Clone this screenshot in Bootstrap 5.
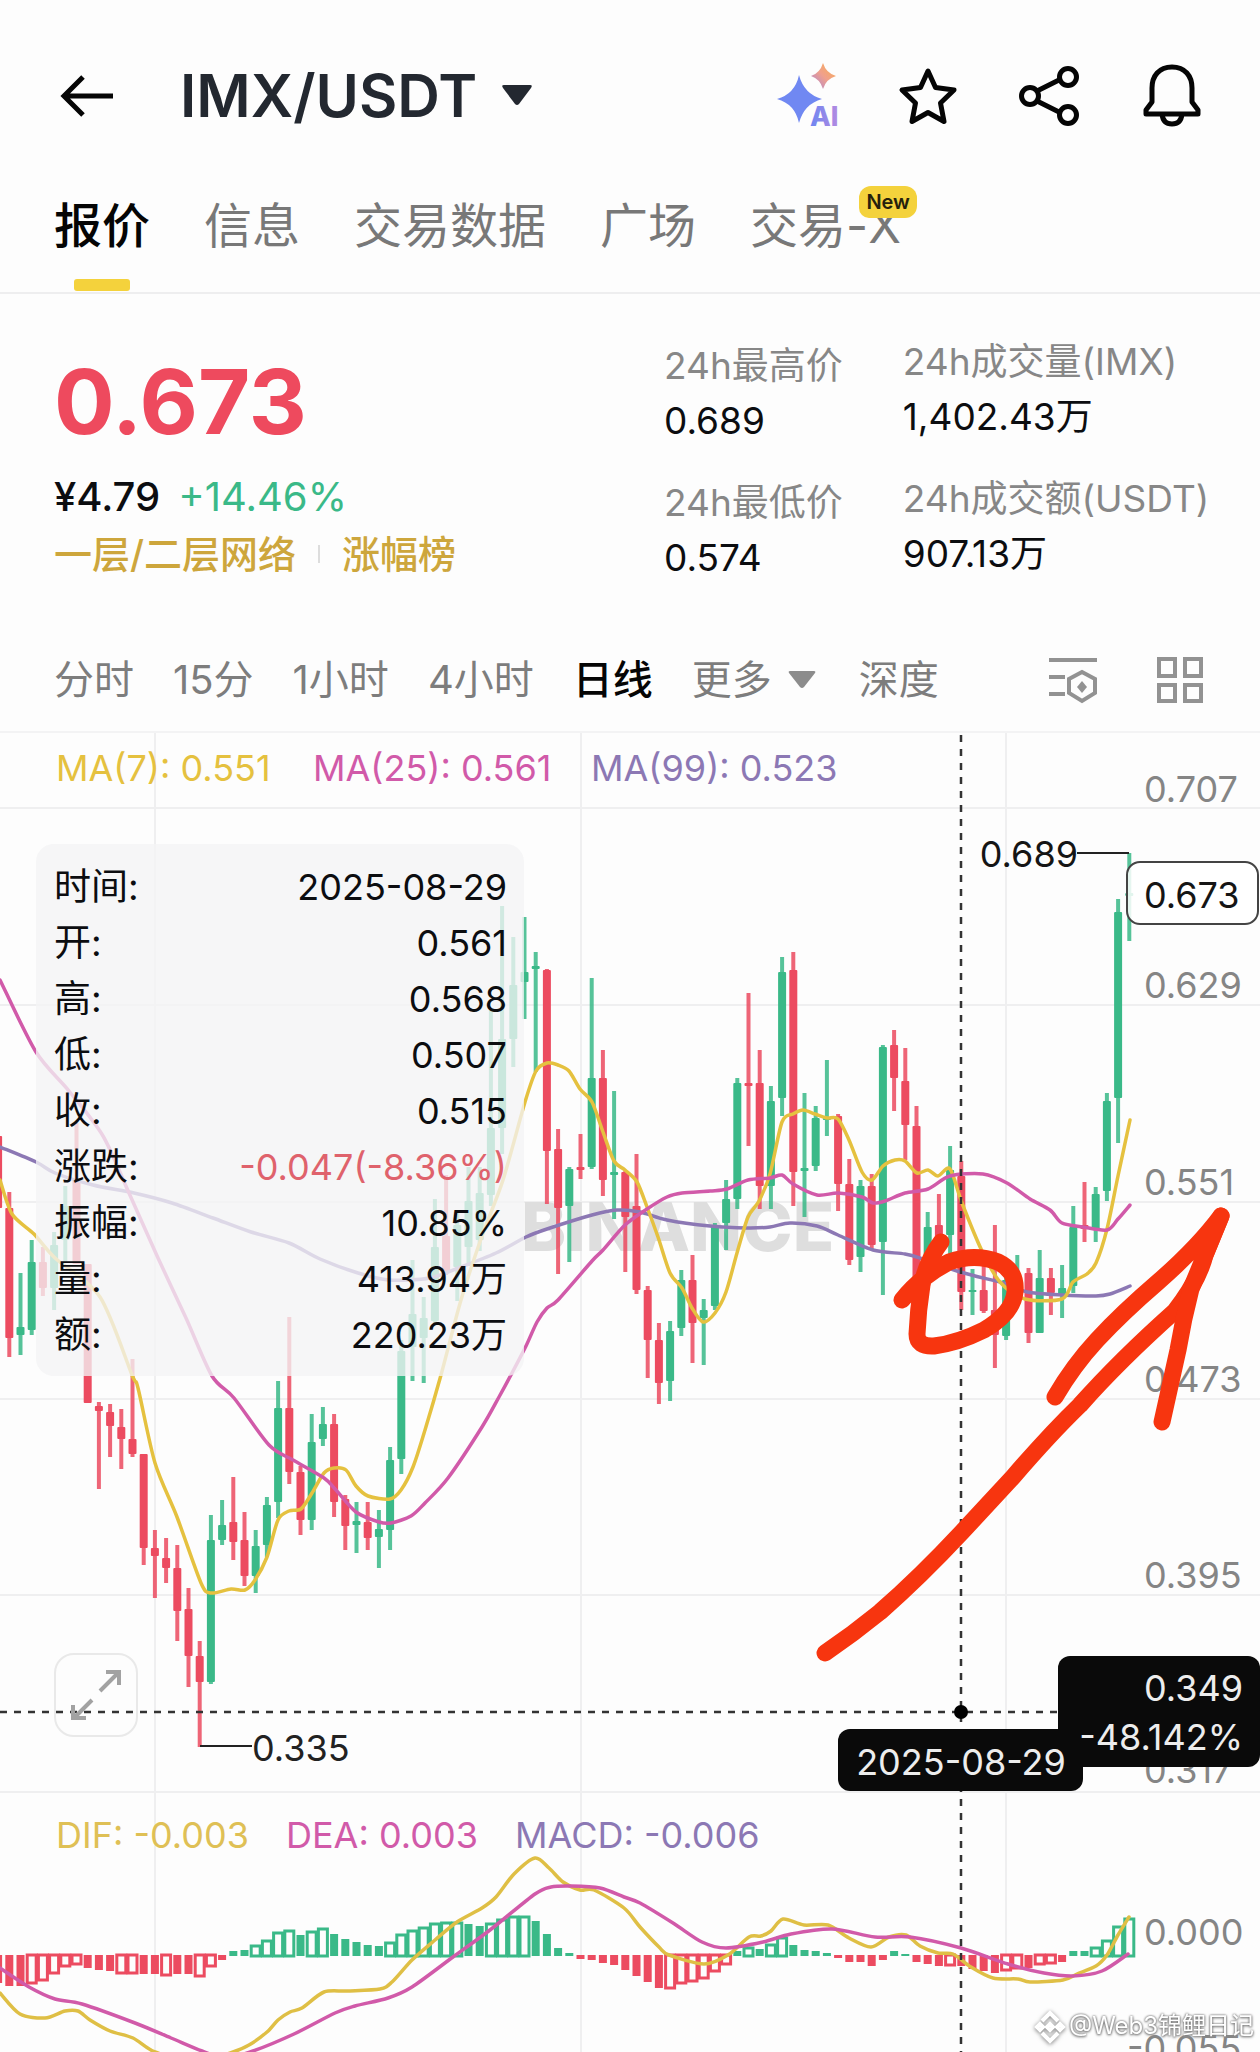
<!DOCTYPE html>
<html lang="zh-CN">
<head>
<meta charset="utf-8">
<meta name="viewport" content="width=device-width, initial-scale=1">
<title>IMX/USDT</title>
<link href="https://cdn.jsdelivr.net/npm/bootstrap@5.3.0/dist/css/bootstrap.min.css" rel="stylesheet">
<style>
:root { --up:#3ab988; --down:#ec4b60; --gold:#f4d23c; --ink:#0c0d10; --muted-ink:#7d7d7d; }
body { font-family: Inter, "Noto Sans CJK SC", sans-serif; background:#fdfdfd; color:var(--ink); overflow-x:hidden; }
button { color:inherit; }
.bar-pad { padding-left:54px; padding-right:56px; }
.top-bar { height:190px; }
.plain-btn { border:0; background:none; padding:0; line-height:1; }
.pair-btn { font-size:59px; font-weight:600; color:#232830; margin-left:62px; }
.top-icons { gap:58px; }
.top-icons svg, .back-btn svg { display:block; }
.tab-list { height:104px; gap:54px; border-bottom:2px solid #eeeeef; }
.tab-link { position:relative; font-size:48px; line-height:72px; color:#787878; text-decoration:none; white-space:nowrap; }
.tab-link.active { color:#050505; font-weight:500; }
.tab-link.active::after { content:""; position:absolute; left:20px; right:20px; bottom:1px; height:12px; border-radius:3px; background:var(--gold); }
.new-tag { position:absolute; right:-16px; top:-4px; padding:0 7px; border-radius:12px 12px 12px 10px; background:var(--gold); color:#25210c; font-size:20px; line-height:32px; font-weight:600; }
.summary { height:334px; }
.quote-col { padding-top:60px; width:610px; }
.last-price { font-size:90px; line-height:96px; font-weight:700; color:#ee4a5e; }
.fiat-line { font-size:40px; line-height:48px; margin-top:23px; font-weight:500; }
.fiat-line .chg { color:var(--up); margin-left:18px; font-weight:400; }
.tag-line { font-size:38px; line-height:48px; margin-top:9px; }
.tag-line a { color:#cda63c; text-decoration:none; font-weight:500; }
.tag-sep { width:2px; height:18px; background:#ddd; margin:0 22px; }
.stat-cols { gap:60px; }
.stat-col { font-size:37px; line-height:55px; white-space:nowrap; padding-top:44px; }
.stat-col.raised { padding-top:40px; }
.stat-col dt { font-weight:400; color:#878787; }
.stat-col dd { margin:0 0 27px; }
.period-bar { height:105px; gap:39px; font-size:40px; color:#7d7d7d; border-bottom:2px solid #f3f3f4; }
.period-bar .on { color:#050505; font-weight:500; }
.chart-svg { display:block; width:100%; }
.chart-svg text { font-size:36px; }
.ohlc { position:absolute; left:36px; top:111px; width:488px; height:532px; padding:15px 17px 13px 18px; border-radius:18px; background:rgba(244,244,245,.78); font-size:37px; line-height:56px; }
.ohlc dt { font-weight:400; }
.ohlc dd { font-size:36px; }
.expand-btn { position:absolute; left:54px; top:920px; width:84px; height:84px; border:2px solid #e9e9e9; border-radius:20px; background:none; padding:0; }
</style>
</head>
<body>
<header>
  <div class="top-bar bar-pad d-flex align-items-center">
    <button class="plain-btn back-btn" aria-label="返回">
      <svg width="64" height="64" viewBox="0 0 64 64" fill="none" stroke="#050505" stroke-width="5"><path d="M59 33H11M29 14L10 33l19 19"/></svg>
    </button>
    <button class="plain-btn pair-btn d-flex align-items-center">IMX/USDT
      <svg class="ms-4" width="32" height="22" viewBox="0 0 32 22"><path d="M3 1h26q3 0 1 3L18 20q-2 2-4 0L2 4Q0 1 3 1z" fill="#232830"/></svg>
    </button>
    <div class="top-icons d-flex ms-auto">
      <button class="plain-btn" aria-label="AI">
        <svg width="64" height="64" viewBox="-3 0 64 64" style="overflow:visible"><defs><linearGradient id="g1" x1="0" y1="1" x2="1" y2="0"><stop offset="0" stop-color="#a884dc"/><stop offset=".5" stop-color="#f0a08c"/><stop offset="1" stop-color="#f9b04c"/></linearGradient><linearGradient id="g2"><stop offset="0" stop-color="#6c86f2"/><stop offset="1" stop-color="#b48ae0"/></linearGradient></defs>
          <path d="M22 12Q27 31 45 36Q27 41 22 60Q18 41 0 36Q18 31 22 12z" fill="#7088f2"/><path d="M46 0Q49 10 59 13Q49 16 46 26Q43 16 34 13Q43 10 46 0z" fill="url(#g1)"/>
          <text x="33" y="63" font-size="27" font-weight="800" fill="url(#g2)" stroke="#fdfdfd" stroke-width="4" paint-order="stroke">AI</text></svg>
      </button>
      <button class="plain-btn" aria-label="收藏"><svg width="64" height="64" viewBox="0 0 64 64" fill="none" stroke="#050505" stroke-width="5" stroke-linejoin="round"><path d="M32 8l7.500 16.500L58 27 44.500 40 48 58.500 32 49.500 16 58.500 19.500 40 6 27l18.500-2.500z"/></svg></button>
      <button class="plain-btn" aria-label="分享"><svg width="64" height="64" viewBox="0 0 64 64" fill="none" stroke="#050505" stroke-width="5"><circle cx="12" cy="33" r="8.500"/><circle cx="50" cy="14" r="8.500"/><circle cx="50" cy="52" r="8.500"/><path d="M19 28l24-12M19 38l24 12"/></svg></button>
      <button class="plain-btn" aria-label="提醒"><svg width="64" height="64" viewBox="0 0 64 64" fill="none" stroke="#050505" stroke-width="5" stroke-linejoin="round"><path d="M32 4C19 4 12 13 12 25V39L6 47V51H58V47L52 39V25C52 13 45 4 32 4zM22 51Q23 61 32 61T42 51"/></svg></button>
    </div>
  </div>
  <nav class="tab-list bar-pad d-flex">
    <a class="tab-link active" href="#">报价</a><a class="tab-link" href="#">信息</a><a class="tab-link" href="#">交易数据</a><a class="tab-link" href="#">广场</a>
    <a class="tab-link" href="#">交易-X<span class="new-tag">New</span></a>
  </nav>
</header>
<main>
  <section class="summary bar-pad d-flex align-items-start">
    <div class="quote-col flex-shrink-0">
      <div class="last-price">0.673</div>
      <div class="fiat-line">¥4.79<span class="chg">+14.46%</span></div>
      <div class="tag-line d-flex align-items-center"><a href="#">一层/二层网络</a><span class="tag-sep"></span><a href="#">涨幅榜</a></div>
    </div>
    <div class="stat-cols d-flex">
      <dl class="stat-col mb-0"><dt>24h最高价</dt><dd>0.689</dd><dt>24h最低价</dt><dd>0.574</dd></dl>
      <dl class="stat-col raised mb-0"><dt>24h成交量(IMX)</dt><dd>1,402.43万</dd><dt>24h成交额(USDT)</dt><dd>907.13万</dd></dl>
    </div>
  </section>
  <nav class="period-bar bar-pad d-flex align-items-center">
    <button class="plain-btn">分时</button><button class="plain-btn">15分</button><button class="plain-btn">1小时</button><button class="plain-btn">4小时</button><button class="plain-btn on">日线</button>
    <button class="plain-btn d-flex align-items-center">更多<svg class="ms-3" width="28" height="18" viewBox="0 0 28 18"><path d="M2 0h24q2 0 1 2L16 16q-2 2-4 0L1 2Q0 0 2 0z" fill="#8c8c8c"/></svg></button>
    <button class="plain-btn ms-1">深度</button>
    <button class="plain-btn ms-auto" aria-label="指标设置"><svg class="d-block" width="54" height="48" viewBox="0 0 54 48" fill="none" stroke="#929292" stroke-width="4"><path d="M2 4h48M2 21h16M2 38h16M35 16l13 7v14l-13 8-13-8V23z"/><path d="M35 25l5 6-5 6-5-6z" fill="#929292" stroke="none"/></svg></button>
    <button class="plain-btn ms-3" aria-label="布局"><svg class="d-block" width="48" height="48" viewBox="0 0 48 48" fill="none" stroke="#929292" stroke-width="4"><path d="M3 3h16v17H3zM29 3h16v17H29zM3 29h16v16H3zM29 29h16v16H29z"/></svg></button>
  </nav>
  <section class="position-relative overflow-hidden">
    <svg class="chart-svg" id="chart" viewBox="0 733 1260 1319">
      <g stroke="#efeff0" stroke-width="2"><path d="M0 808H1260M0 1005H1260M0 1202H1260M0 1399H1260M0 1595H1260M0 1792H1260M155 733V2052M581 733V2052M1006 733V2052"/></g>
      <text x="521" y="1251" style="font-size:68px" font-weight="800" fill="#dedede">BINANCE</text>
      <g id="candles"></g>
      <g id="macd"></g>
      <g id="lines" fill="none" stroke-width="3.500" stroke-linejoin="round" stroke-linecap="round"></g>
      <text x="56" y="781" fill="#e5c13f">MA(7): 0.551</text><text x="313" y="781" fill="#d15aa9">MA(25): 0.561</text><text x="591" y="781" fill="#8c78b4">MA(99): 0.523</text>
      <text x="56" y="1848" fill="#dfc055">DIF: -0.003</text><text x="286" y="1848" fill="#d15aa9">DEA: 0.003</text><text x="515" y="1848" fill="#8c78b4">MACD: -0.006</text>
      <g fill="#858585"><text x="1144" y="802">0.707</text><text x="1144" y="998">0.629</text><text x="1144" y="1195">0.551</text><text x="1144" y="1392">0.473</text><text x="1144" y="1588">0.395</text><text x="1144" y="1783">0.317</text><text x="1144" y="1945">0.000</text><text x="1127" y="2061">-0.055</text></g>
      <g stroke="#222" stroke-width="2"><path d="M1077 853H1129M200 1746H252"/></g>
      <text x="1078" y="867" text-anchor="end" fill="#151515">0.689</text><text x="252" y="1761" fill="#222">0.335</text>
      <rect x="1127" y="862" width="131" height="62" rx="13" fill="#fff" fill-opacity=".85" stroke="#444" stroke-width="2"/>
      <text x="1144" y="908" fill="#151515">0.673</text>
      <g stroke="#333" stroke-width="2.500" stroke-dasharray="7 7"><path d="M961 735V2052M0 1712H1058"/></g>
      <circle cx="961" cy="1712" r="7"/>
      <g fill="#0a0a0a"><rect x="838" y="1729" width="245" height="62" rx="12"/><rect x="1058" y="1656" width="202" height="111" rx="12"/></g>
      <g fill="#ededed"><text x="961" y="1775" text-anchor="middle">2025-08-29</text><g text-anchor="end"><text x="1243" y="1701">0.349</text><text x="1243" y="1750">-48.142%</text></g></g>
      <g fill="none" stroke="#f7350f" stroke-width="17" stroke-linecap="round" stroke-linejoin="round">
        <path d="M941 1242Q926 1262 922 1285Q918 1310 917 1334Q917 1347 934 1346Q958 1343 984 1330Q1013 1313 1015 1292Q1017 1271 998 1262Q975 1253 949 1262Q920 1277 902 1300"/>
        <path d="M825 1653Q853 1634 880 1612Q920 1577 962 1532L1013 1477Q1050 1434 1080 1405Q1120 1360 1175 1311Q1199 1280 1205 1255L1221 1216"/>
        <path d="M1055 1397Q1073 1366 1097 1340Q1122 1313 1158 1282Q1198 1247 1221 1216Q1207 1250 1191 1289Q1183 1320 1178 1350L1162 1422"/>
      </g>
      <g fill="none" stroke="#fff" stroke-width="4" style="filter:drop-shadow(0 1px 2px #777)"><path d="M1042 2021l8-8 8 8M1042 2033l8 8 8-8M1037 2027l3-3 3 3-3 3zM1057 2027l3-3 3 3-3 3zM1047 2027l3-3 3 3-3 3z"/></g>
      <text x="1069" y="2034" fill="#fff" style="font-size:24px;filter:drop-shadow(0 0 1px #666) drop-shadow(0 1px 1px #999)">@Web3锦鲤日记</text>
    </svg>
    <dl class="ohlc mb-0" id="ohlc">
      <div class="d-flex justify-content-between"><dt>时间:</dt><dd class="mb-0">2025-08-29</dd></div>
      <div class="d-flex justify-content-between"><dt>开:</dt><dd class="mb-0">0.561</dd></div>
      <div class="d-flex justify-content-between"><dt>高:</dt><dd class="mb-0">0.568</dd></div>
      <div class="d-flex justify-content-between"><dt>低:</dt><dd class="mb-0">0.507</dd></div>
      <div class="d-flex justify-content-between"><dt>收:</dt><dd class="mb-0">0.515</dd></div>
      <div class="d-flex justify-content-between"><dt>涨跌:</dt><dd class="mb-0" style="color:#df626c">-0.047(-8.36%)</dd></div>
      <div class="d-flex justify-content-between"><dt>振幅:</dt><dd class="mb-0">10.85%</dd></div>
      <div class="d-flex justify-content-between"><dt>量:</dt><dd class="mb-0">413.94万</dd></div>
      <div class="d-flex justify-content-between"><dt>额:</dt><dd class="mb-0">220.23万</dd></div>
    </dl>
    <button class="expand-btn" aria-label="全屏"><svg width="80" height="80" viewBox="0 0 80 80" fill="none" stroke="#a2a2a2" stroke-width="4"><path d="M44 36L62 18M50 17H63V30M36 45L18 63M17 50V63H30"/></svg></button>
  </section>
</main>
<script src="https://cdn.jsdelivr.net/npm/bootstrap@5.3.0/dist/js/bootstrap.bundle.min.js"></script>
<script>
const step = 11.2, start = -1.9, UP = '#3ab988', DOWN = '#ec4b60';
// one candle per entry: direction, high, body top, body bottom, low
const candles = `r1136,1136,1208,1208 r1192,1208,1338,1357 g1273,1327,1335,1355 g1240,1262,1330,1335 r1247,1262,1288,1296 g1232,1245,1288,1310 g1186,1206,1240,1262 r1123,1180,1264,1264 r1264,1264,1403,1403 r1402,1406,1411,1489
r1404,1412,1426,1457 r1409,1427,1439,1469 r1359,1439,1454,1457 r1454,1454,1548,1565 r1530,1548,1556,1598 r1538,1558,1568,1583 r1545,1568,1611,1641 r1588,1609,1656,1687 r1641,1656,1682,1747 g1515,1540,1682,1684
g1500,1525,1540,1545 r1477,1522,1542,1560 r1512,1540,1576,1586 g1530,1546,1576,1593 g1497,1505,1545,1557 g1381,1408,1502,1518 r1317,1408,1472,1484 r1466,1472,1520,1535 g1414,1442,1520,1530 g1407,1424,1439,1446
r1414,1424,1502,1517 r1495,1499,1526,1550 g1502,1521,1525,1553 r1502,1522,1538,1550 g1510,1529,1537,1568 g1447,1460,1530,1550 g1340,1351,1459,1474 g1260,1314,1347,1381 g1297,1318,1338,1383 g1199,1247,1321,1323
r1175,1236,1271,1275 g1210,1225,1267,1301 g1167,1201,1247,1266 g1167,1193,1240,1251 g1010,1128,1195,1206 g906,1039,1128,1154 g937,985,1039,1067 g917,972,982,1019 g952,966,969,1072 r969,970,1151,1204
r1129,1149,1208,1274 g1167,1169,1206,1262 r1134,1167,1170,1179 g978,1078,1167,1169 r1050,1078,1180,1196 g1091,1172,1175,1219 r1171,1172,1217,1272 r1154,1206,1290,1294 r1286,1290,1340,1378 r1323,1340,1383,1404
g1321,1331,1381,1401 g1270,1280,1328,1336 r1255,1280,1323,1363 g1299,1310,1318,1365 g1223,1225,1306,1310 g1180,1199,1223,1250 g1078,1083,1199,1209 r993,1083,1086,1146 r1050,1083,1186,1209 g1086,1101,1186,1209
g957,972,1098,1116 r952,970,1172,1206 g1093,1168,1171,1217 g1106,1118,1166,1171 g1060,1117,1120,1136 r1114,1116,1184,1211 r1159,1184,1260,1265 g1180,1186,1257,1272 r1174,1186,1245,1249 g1045,1047,1242,1295
r1030,1045,1078,1111 r1048,1081,1125,1160 r1106,1126,1278,1278 g1212,1227,1255,1260 r1194,1225,1243,1245 g1146,1170,1235,1257 r1161,1176,1292,1310 g1269,1290,1292,1315 r1259,1290,1311,1313 r1225,1310,1335,1368
g1270,1280,1336,1340 g1255,1275,1282,1290 r1268,1273,1333,1343 g1250,1278,1333,1333 r1268,1278,1293,1315 g1265,1288,1294,1318 g1206,1227,1286,1293 r1182,1225,1229,1242 g1187,1194,1229,1242 g1093,1101,1191,1201
g899,912,1098,1143 g853,893,896,941`.split(/\s+/);
document.getElementById('candles').innerHTML = candles.map((c, i) => {
  const x = start + step * i, [h, t, b, l] = c.slice(1).split(',').map(Number), col = c[0] === 'g' ? UP : DOWN;
  return `<path d="M${x} ${h}V${l}" stroke="${col}" stroke-width="4" opacity=".85"/><rect x="${x - 4}" y="${t}" width="8" height="${b - t}" rx="1" fill="${col}"/>`;
}).join('');
// histogram heights; h marks a hollow bar
const hist = `-28 -31 -31 -28h -25h -18h -11h -9h -13 -15 -16 -18h -18h -19 -19 -20h -19 -19 -21h -11h -5 5 6 10h 15h 23h 25h 21 24h 27h 22 17 14 11 10 13h 21h 25h 28h 32h 33h 33h 32 30 32h 36h 39h 39h 35 22 8 3 -4 -5 -8 -10 -15 -21 -27 -33 -33h -28h -26h -23h -16h -9h 5 8h 7 11h 18h 11 6 5 3 -3 -7 -7 -11 -5 5 2 -7 -9 -11 -10h -11 -14 -16 -18 -15h -13h -13 -9h -8h -7 5 5 8h 15h 29h 37h`.split(' ');
document.getElementById('macd').innerHTML = hist.map((s, i) => {
  const x = start + step * i, v = parseInt(s), col = v > 0 ? UP : DOWN, hollow = s.endsWith('h'), y = v > 0 ? 1956 - v : 1955;
  return hollow
    ? `<rect x="${x - 4.5}" y="${y}" width="9" height="${Math.abs(v)}" fill="#fdfdfd" stroke="${col}" stroke-width="3"/>`
    : `<rect x="${x - 4}" y="${y}" width="8" height="${Math.abs(v)}" fill="${col}"/>`;
}).join('');
function curve(str) {
  const p = str.trim().split(/\s+/).map(s => s.split(',').map(Number));
  let d = `M${p[0]}`;
  for (let i = 0; i < p.length - 1; i++) {
    const a = p[i - 1] || p[i], b = p[i], c = p[i + 1], e = p[i + 2] || c;
    d += `C${b[0] + (c[0] - a[0]) / 7} ${b[1] + (c[1] - a[1]) / 7} ${c[0] - (e[0] - b[0]) / 7} ${c[1] - (e[1] - b[1]) / 7} ${c[0]} ${c[1]}`;
  }
  return d;
}
const series = [
 ['#8c78b4', `0,1147 36,1162 55,1173 93,1185 134,1193 172,1203 213,1218 251,1232 289,1243 320,1259 358,1273 389,1280 430,1278 461,1267 496,1253 526,1237 547,1229 592,1215 617,1210 640,1212 667,1220 710,1226 747,1228 770,1227 790,1223 817,1226 838,1235 873,1250 905,1254 923,1259 960,1272 1007,1284 1027,1292 1062,1295 1096,1296 1110,1294 1130,1286`],
 ['#e5c13f', `0,1180 12,1214 34,1234 55,1258 100,1297 132,1375 138,1388 155,1463 177,1517 201,1583 211,1593 231,1589 245,1590 255,1580 267,1557 278,1520 289,1511 301,1509 312,1493 324,1473 334,1468 346,1470 356,1486 368,1496 390,1499 401,1490 413,1467 425,1430 441,1375 461,1300 482,1236 503,1180 525,1102 536,1071 547,1063 558,1065 569,1071 580,1089 592,1102 603,1132 614,1161 625,1170 637,1182 647,1207 658,1237 670,1273 682,1288 692,1308 703,1322 715,1313 726,1292 737,1253 748,1217 759,1201 770,1174 782,1122 793,1114 803,1110 815,1114 827,1118 838,1119 849,1140 862,1172 872,1180 883,1166 895,1160 905,1161 917,1173 928,1170 938,1176 950,1169 962,1203 982,1251 1000,1282 1025,1299 1062,1299 1073,1282 1087,1274 1096,1263 1107,1229 1118,1176 1130,1120`],
 ['#d15aa9', `0,980 36,1052 69,1091 103,1136 129,1193 158,1258 186,1318 212,1376 234,1398 269,1445 293,1460 324,1478 336,1490 356,1512 379,1522 391,1523 411,1516 425,1503 448,1478 482,1427 499,1397 512,1373 526,1346 537,1322 547,1308 558,1300 592,1261 603,1250 625,1225 647,1209 667,1197 682,1193 710,1191 727,1189 748,1180 770,1178 782,1175 793,1184 817,1195 838,1193 862,1197 873,1203 885,1201 905,1193 928,1189 950,1176 983,1174 1007,1183 1030,1199 1050,1210 1062,1223 1083,1227 1107,1230 1118,1219 1130,1205`],
 ['#dfbf45', `0,1993 20,2014 45,2018 65,2011 78,2011 90,2020 110,2031 133,2038 155,2052 196,2062 233,2052 249,2045 267,2032 278,2020 290,2012 302,2008 324,1992 347,1991 380,1989 392,1982 412,1960 435,1940 457,1922 482,1908 496,1897 514,1874 535,1858 549,1868 563,1882 580,1890 594,1890 624,1908 640,1927 659,1947 669,1955 704,1964 728,1955 749,1937 761,1936 771,1931 783,1919 804,1925 828,1925 849,1938 871,1947 889,1937 906,1935 920,1946 938,1953 953,1954 971,1967 993,1978 1018,1979 1030,1982 1063,1980 1077,1974 1096,1966 1107,1955 1118,1935 1129,1917`],
 ['#d15aa9', `0,1968 29,1987 55,1999 82,2004 135,2023 171,2038 202,2051 225,2058 253,2051 294,2034 335,2013 355,2006 388,1998 412,1987 453,1957 490,1930 535,1894 551,1887 571,1886 600,1888 624,1897 640,1903 673,1923 702,1942 726,1948 763,1942 791,1934 832,1929 875,1937 910,1937 961,1948 1008,1964 1044,1973 1073,1976 1102,1971 1128,1954`]
];
document.getElementById('lines').innerHTML = series.map(([c, s]) => `<path d="${curve(s)}" stroke="${c}"/>`).join('');
</script>
</body>
</html>
